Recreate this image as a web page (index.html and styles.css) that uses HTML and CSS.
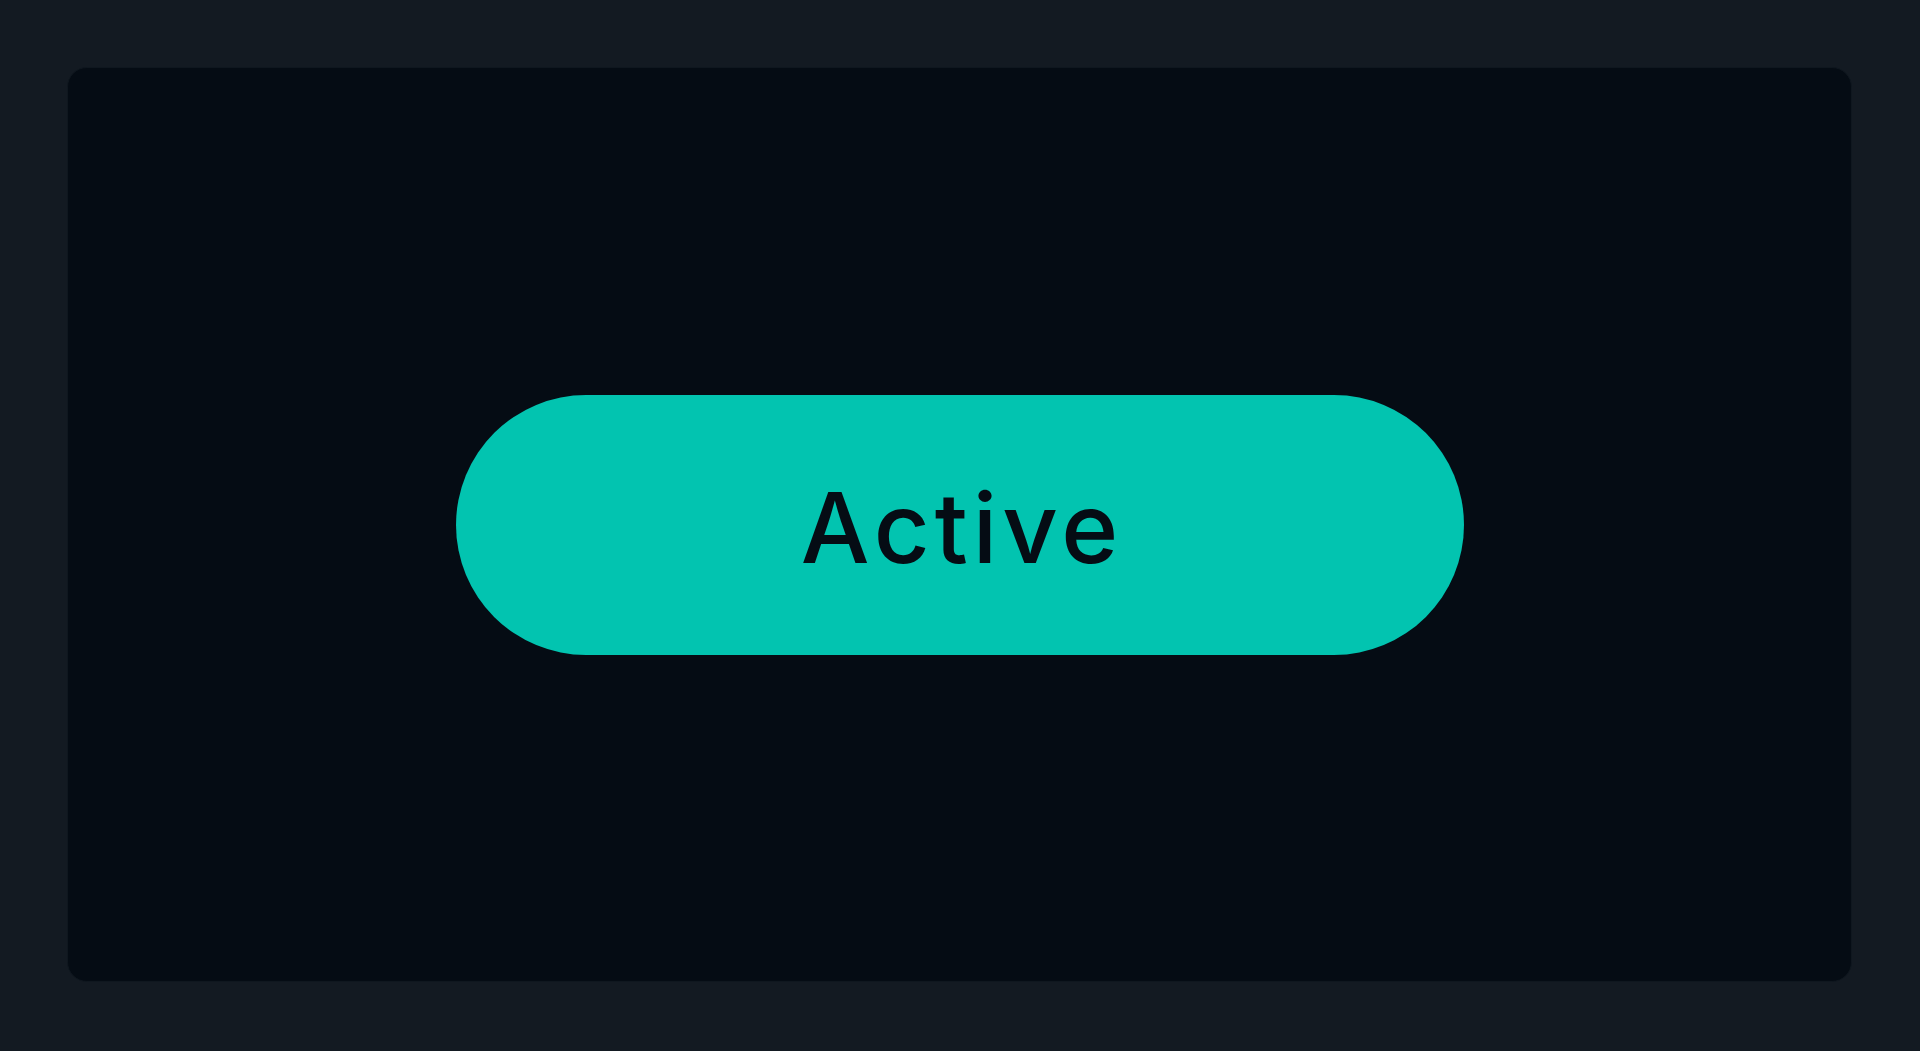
FILE: index.html
```html
<!DOCTYPE html>
<html lang="en">
<head>
<meta charset="utf-8">
<title>Active</title>
<link rel="stylesheet" href="styles.css">
</head>
<body>
<main class="frame">
  <section class="panel">
    <button class="pill" type="button">Active</button>
  </section>
</main>
</body>
</html>
```

FILE: styles.css
```css
html, body {
  margin: 0;
  height: 100%;
  background: #131a22;
}
.frame {
  box-sizing: border-box;
  height: 1051px;
  padding: 67px 68px 69px 67px;
  display: flex;
}
.panel {
  flex: 1;
  box-sizing: border-box;
  background: #050c14;
  border: 1px solid #0f171f;
  border-radius: 20px;
  display: flex;
  align-items: center;
  justify-content: center;
}
.pill {
  width: 1008px;
  height: 260px;
  border: none;
  border-radius: 130px;
  background: #02c4b0;
  color: #050c14;
  font-family: Inter, "Noto Sans", sans-serif;
  font-weight: 500;
  font-size: 97px;
  letter-spacing: 5px;
  line-height: 1;
  padding: 4px 0 0 5px;
  margin-top: 1px;
  cursor: pointer;
}
```
